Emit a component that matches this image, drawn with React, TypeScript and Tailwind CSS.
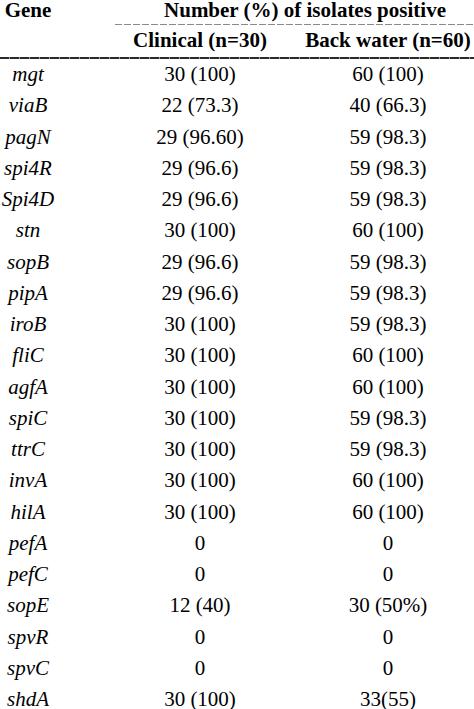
import React from "react";

const rows: [string, string, string][] = [
  ["mgt", "30 (100)", "60 (100)"],
  ["viaB", "22 (73.3)", "40 (66.3)"],
  ["pagN", "29 (96.60)", "59 (98.3)"],
  ["spi4R", "29 (96.6)", "59 (98.3)"],
  ["Spi4D", "29 (96.6)", "59 (98.3)"],
  ["stn", "30 (100)", "60 (100)"],
  ["sopB", "29 (96.6)", "59 (98.3)"],
  ["pipA", "29 (96.6)", "59 (98.3)"],
  ["iroB", "30 (100)", "59 (98.3)"],
  ["fliC", "30 (100)", "60 (100)"],
  ["agfA", "30 (100)", "60 (100)"],
  ["spiC", "30 (100)", "59 (98.3)"],
  ["ttrC", "30 (100)", "59 (98.3)"],
  ["invA", "30 (100)", "60 (100)"],
  ["hilA", "30 (100)", "60 (100)"],
  ["pefA", "0", "0"],
  ["pefC", "0", "0"],
  ["sopE", "12 (40)", "30 (50%)"],
  ["spvR", "0", "0"],
  ["spvC", "0", "0"],
  ["shdA", "30 (100)", "33(55)"],
];

export default function App() {
  return (
    <div className="w-[474px] h-[709px] overflow-hidden bg-white text-black font-['Liberation_Serif','Times_New_Roman',serif]">
      <div className="w-[491px]">
        {/* header */}
        <div className="grid grid-cols-[115px_170px_206px] text-[21px] font-bold leading-[21px]">
          <div className="row-span-2">
            <div className="w-[56px] text-center">Gene</div>
          </div>
          <div className="col-span-2 h-[25px] flex flex-col">
            <div className="text-center pl-[4px]">Number (%) of isolates positive</div>
            <div className="mt-auto h-px bg-[repeating-linear-gradient(90deg,#8a8a8a_0_7px,transparent_7px_9px)]" />
          </div>
          <div className="h-[32px] pt-[5px] text-center">Clinical (n=30)</div>
          <div className="h-[32px] pt-[5px] text-center">Back water (n=60)</div>
        </div>
        <div className="h-[2px] bg-[repeating-linear-gradient(90deg,#2a2a2a_0_9px,#9a9a9a_9px_10px)]" />
        {/* body */}
        <div className="text-[21px]">
          {rows.map(([g, a, b]) => (
            <div
              key={g}
              className="grid grid-cols-[115px_170px_206px] h-[31.25px] leading-[31.25px]"
            >
              <div>
                <div className="w-[56px] text-center italic">{g}</div>
              </div>
              <div className="text-center">{a}</div>
              <div className="text-center">{b}</div>
            </div>
          ))}
        </div>
      </div>
    </div>
  );
}
